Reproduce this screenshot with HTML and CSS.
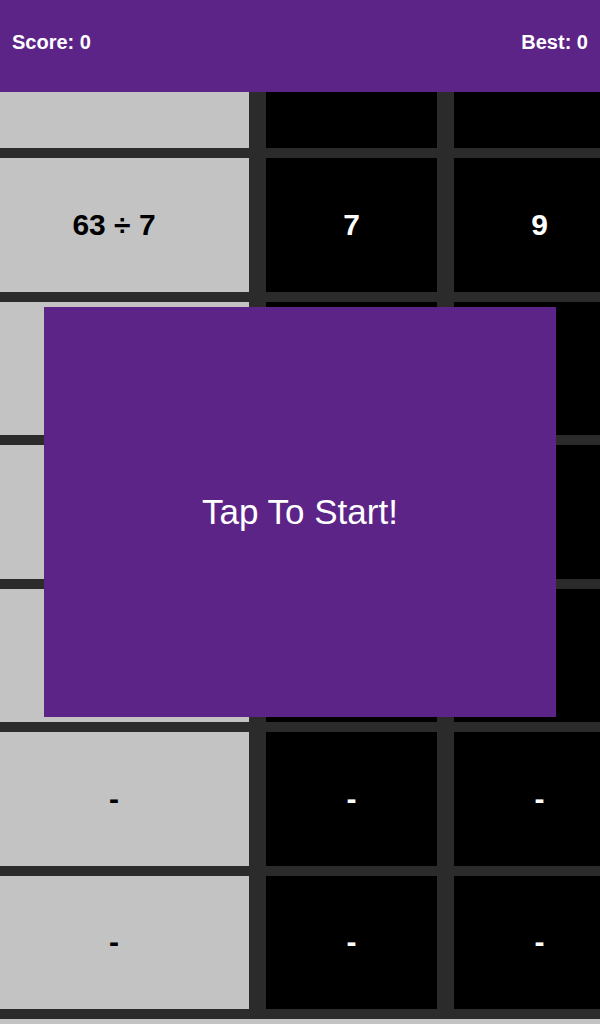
FILE: index.html
```html
<!DOCTYPE html>
<html lang="en">
<head>
<meta charset="utf-8">
<title>Math Tiles</title>
<link rel="stylesheet" href="styles.css">
</head>
<body>
<div class="board">
  <div class="row"><div class="cell q">70 ÷ 7</div><div class="cell a">4</div><div class="cell a">10</div></div>
  <div class="row"><div class="cell q">63 ÷ 7</div><div class="cell a">7</div><div class="cell a">9</div></div>
  <div class="row"><div class="cell q"></div><div class="cell a"></div><div class="cell a"></div></div>
  <div class="row"><div class="cell q"></div><div class="cell a"></div><div class="cell a"></div></div>
  <div class="row"><div class="cell q"></div><div class="cell a"></div><div class="cell a"></div></div>
  <div class="row"><div class="cell q">-</div><div class="cell a">-</div><div class="cell a">-</div></div>
  <div class="row"><div class="cell q">-</div><div class="cell a">-</div><div class="cell a">-</div></div>
</div>
<header class="topbar">
  <span class="stat">Score: 0</span>
  <span class="stat">Best: 0</span>
</header>
<div class="start">Tap To Start!</div>
</body>
</html>
```
FILE: styles.css
```css
html, body {
  margin: 0;
  padding: 0;
  height: 100%;
  overflow: hidden;
}
body {
  background: #c3c3c3;
  font-family: "Liberation Sans", Arial, sans-serif;
}
.board {
  margin-top: 14.5px;
  margin-left: -21px;
  width: 646px;
  display: flex;
  flex-direction: column;
}
.row {
  display: grid;
  grid-template-columns: 270px 171px 171px;
  column-gap: 17px;
  height: 133.5px;
  border-bottom: 10px solid #2b2b2b;
  background: #2b2b2b;
}
.cell {
  display: flex;
  align-items: center;
  justify-content: center;
  font-size: 30px;
  font-weight: bold;
}
.q {
  background: #c3c3c3;
  color: #000;
}
.a {
  background: #000;
  color: #fff;
}
.topbar {
  position: fixed;
  top: 0;
  left: 0;
  right: 0;
  height: 92px;
  box-sizing: border-box;
  padding: 0 12px 7px 12px;
  background: #5d2488;
  display: flex;
  justify-content: space-between;
  align-items: center;
  color: #fff;
  font-size: 20px;
  font-weight: bold;
}
.start {
  position: fixed;
  left: 44px;
  top: 307px;
  width: 512px;
  height: 410px;
  background: #5d2488;
  color: #fff;
  font-size: 35px;
  display: flex;
  align-items: center;
  justify-content: center;
}
```
